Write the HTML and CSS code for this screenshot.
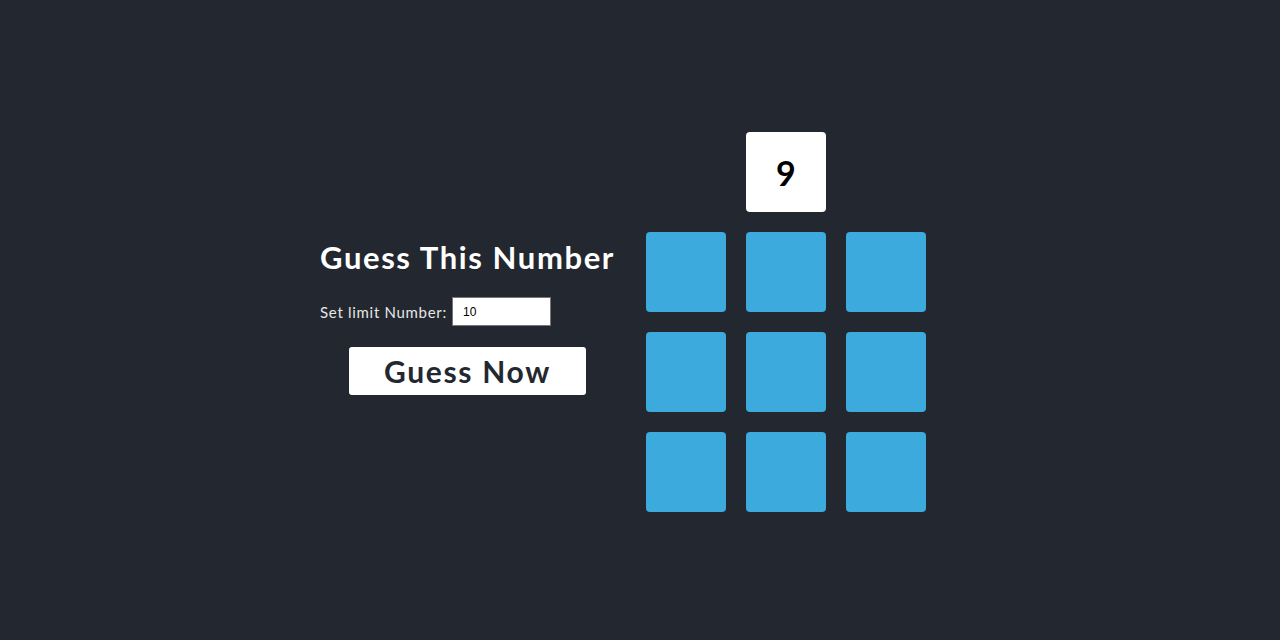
FILE: index.html
```html
<!DOCTYPE html>
<html>
<head>
<meta charset="utf-8">
<link rel="stylesheet" href="styles.css">
</head>
<body>
<div class="app">
  <div class="controls">
    <h1 class="title">Guess This Number</h1>
    <div class="limit-row">
      <label class="limit-label" for="limit">Set limit Number:</label>
      <input class="limit-input" id="limit" type="text" value="10">
    </div>
    <button class="guess-btn">Guess Now</button>
  </div>
  <div class="board">
    <div class="cell"></div>
    <div class="cell"><div class="tile tile-answer">9</div></div>
    <div class="cell"></div>
    <div class="cell"><div class="tile"></div></div>
    <div class="cell"><div class="tile"></div></div>
    <div class="cell"><div class="tile"></div></div>
    <div class="cell"><div class="tile"></div></div>
    <div class="cell"><div class="tile"></div></div>
    <div class="cell"><div class="tile"></div></div>
    <div class="cell"><div class="tile"></div></div>
    <div class="cell"><div class="tile"></div></div>
    <div class="cell"><div class="tile"></div></div>
  </div>
</div>
</body>
</html>
```
FILE: styles.css
```css
html, body {
  margin: 0;
  padding: 0;
  background: #23272f;
  font-family: "Lato", "Liberation Sans", sans-serif;
}
.app {
  height: 640px;
  display: flex;
  justify-content: center;
  align-items: center;
  gap: 21px;
  padding-right: 24px;
  padding-top: 4px;
  box-sizing: border-box;
}
.controls {
  display: flex;
  flex-direction: column;
  align-items: flex-start;
  margin-bottom: 12px;
}
.title {
  margin: 0;
  color: #ffffff;
  font-size: 31px;
  font-weight: 700;
  line-height: 40px;
  letter-spacing: 1.6px;
  white-space: nowrap;
}
.limit-row {
  display: flex;
  align-items: center;
  margin-top: 20px;
}
.limit-label {
  color: #e6e6e6;
  font-size: 15px;
  letter-spacing: 0.7px;
  margin-right: 5px;
}
.limit-input {
  width: 99px;
  height: 29px;
  box-sizing: border-box;
  border: 1px solid #767676;
  background: #fff;
  padding: 0 10px;
  font-family: "Liberation Sans", sans-serif;
  font-size: 12px;
  color: #000;
}
.guess-btn {
  align-self: center;
  margin-top: 21px;
  width: 237px;
  height: 48px;
  border: none;
  border-radius: 3px;
  background: #ffffff;
  color: #23272f;
  font-family: "Lato", "Liberation Sans", sans-serif;
  font-weight: 700;
  font-size: 30px;
  letter-spacing: 1.7px;
  padding: 0;
}
.board {
  display: grid;
  grid-template-columns: repeat(3, 100px);
  grid-auto-rows: 100px;
}
.cell {
  display: flex;
  align-items: center;
  justify-content: center;
}
.tile {
  width: 80px;
  height: 80px;
  border-radius: 4px;
  background: #3caadd;
}
.tile-answer {
  background: #ffffff;
  color: #000;
  display: flex;
  align-items: center;
  justify-content: center;
  font-size: 34px;
  font-weight: 700;
}
```
